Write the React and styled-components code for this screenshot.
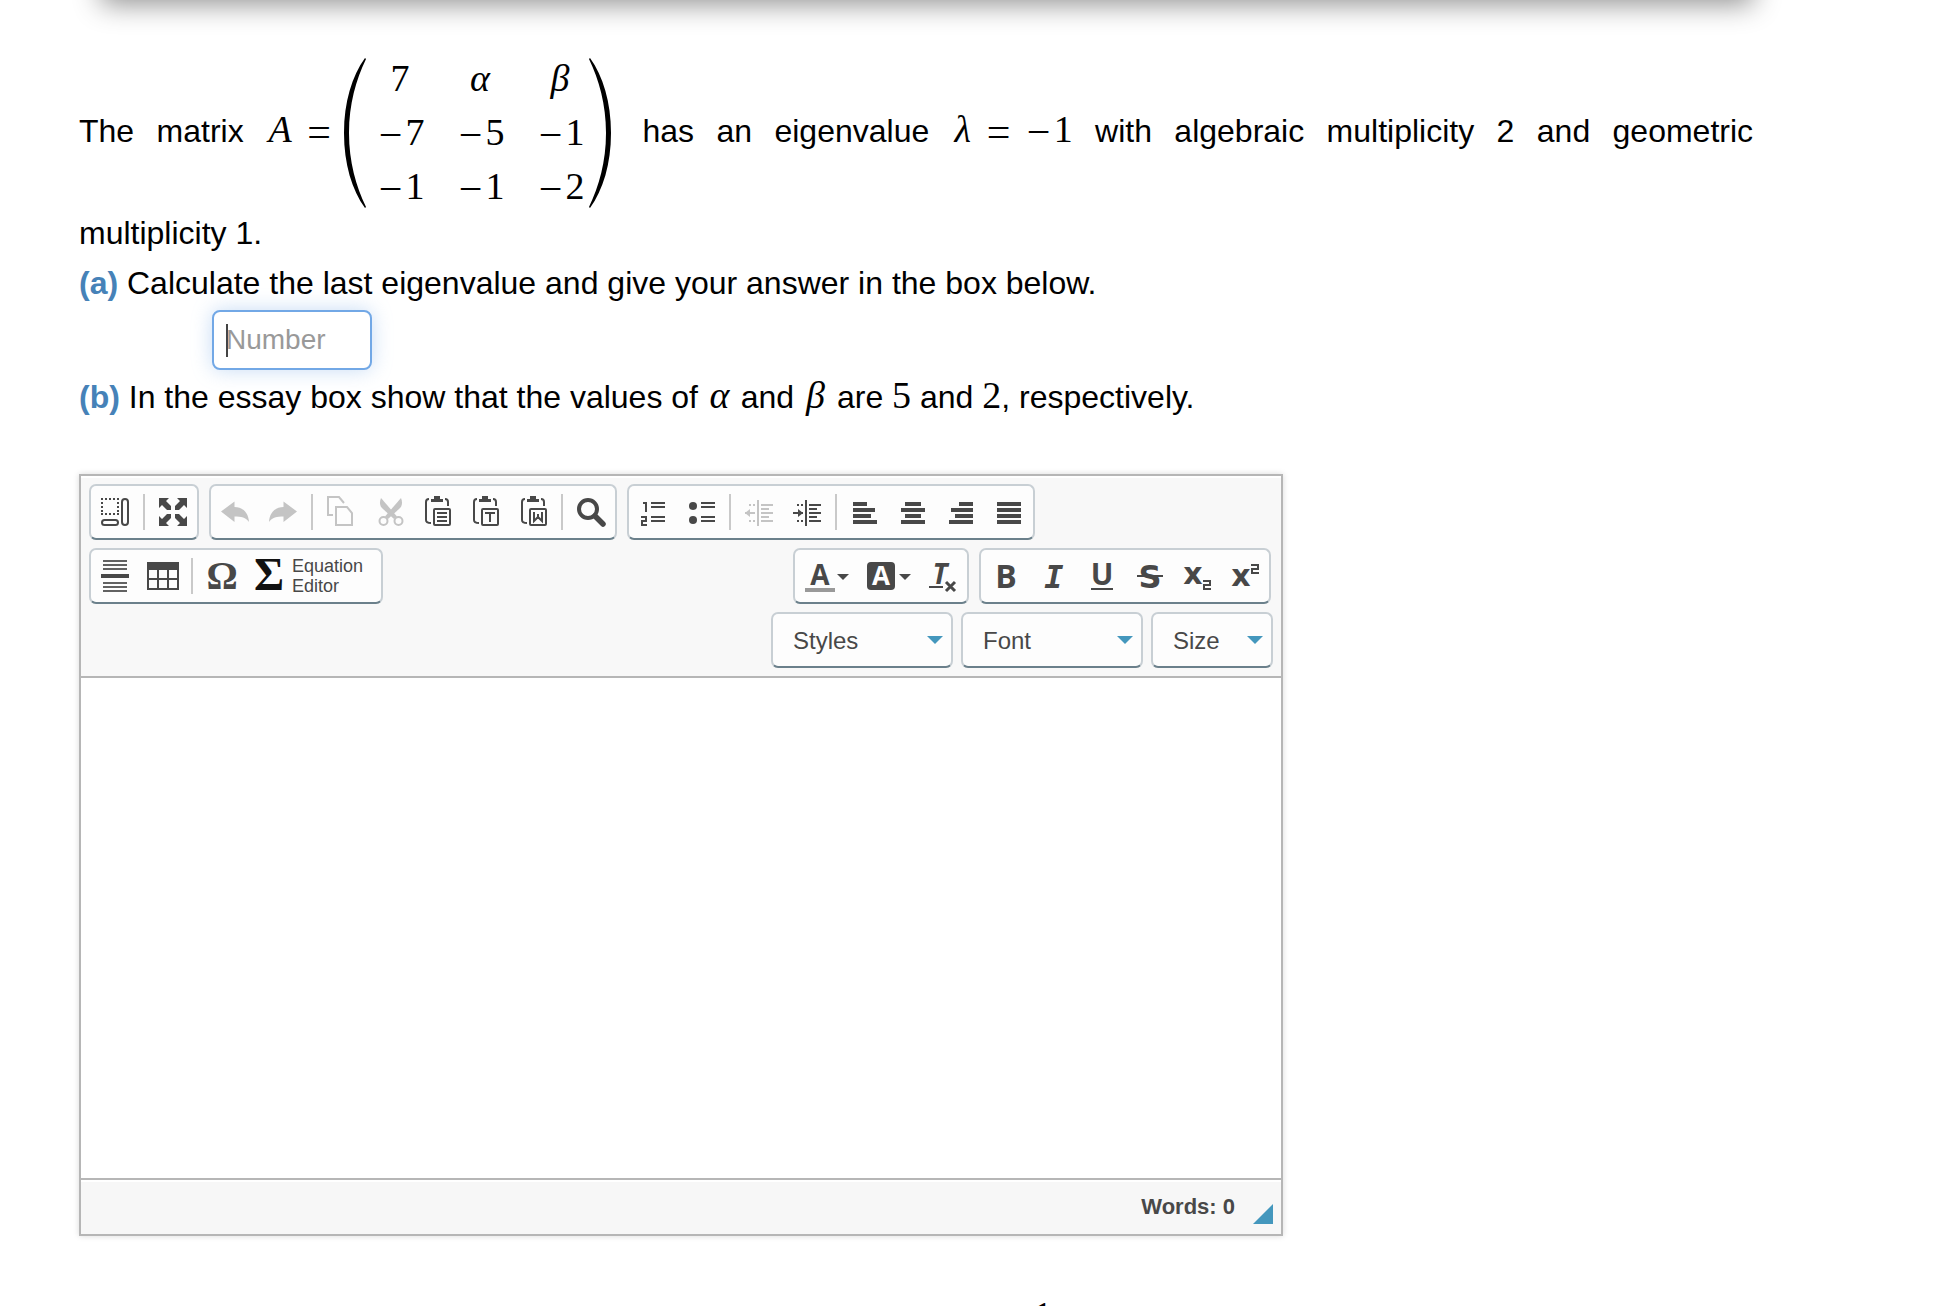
import React from "react";
import styled, { createGlobalStyle } from "styled-components";

const INK = "#484848";
const MUTED = "#c4c4c4";
const SANS = '"Liberation Sans", Arial, Helvetica, sans-serif';
const SERIF = '"Liberation Serif", "Times New Roman", serif';

const GlobalStyle = createGlobalStyle`
  *, *::before, *::after { box-sizing: border-box; }
  body {
    margin: 0;
    background: #fff;
    color: #000;
    font-family: ${SANS};
    font-size: 32px;
    line-height: 46px;
  }
`;

/* ---------- page ---------- */

const Page = styled.main`
  height: 100vh;
  overflow: hidden;
  padding: 0 205px 0 79px;
`;

const PreviousPanel = styled.div`
  height: 40px;
  margin: -40px 0 56px 22px;
  background: #fff;
  box-shadow: 0 4px 28px rgba(0, 0, 0, 0.44);
`;

const Question = styled.section`
  display: flex;
  flex-direction: column;
  gap: 4px;
`;

const Intro = styled.p`
  margin: 0;
  text-align: justify;
`;

const Part = styled.p`
  margin: 0;
`;

const PartLabel = styled.strong`
  color: #4682b8;
  font-weight: 700;
`;

const AnswerRow = styled.div`
  display: flex;
  padding-left: 133px;
`;

const NumberInput = styled.input`
  width: 160px;
  height: 60px;
  padding: 0 12px;
  border: 2px solid #72a8e6;
  border-radius: 8px;
  outline: none;
  font-family: ${SANS};
  font-size: 28px;
  color: #333;
  background: linear-gradient(#444, #444) no-repeat 12px center / 2px 33px #fff;
  box-shadow: 0 0 20px rgba(114, 168, 230, 0.4);

  &::placeholder {
    color: #999;
    opacity: 1;
  }
`;

/* ---------- mathematics ---------- */

const Formula = styled.span`
  display: inline-flex;
  align-items: center;
  padding-right: 9px;
  text-align: center;
`;

const FormulaLead = styled.span`
  padding-bottom: 6px;
  line-height: 38px;
  white-space: nowrap;
`;

const InlineFormula = styled.span`
  display: inline-block;
  line-height: 38px;
  white-space: nowrap;
  text-align: center;
`;

const Letter = styled.i`
  display: inline-block;
  width: ${(p) => p.$w || 25}px;
  font-family: ${SERIF};
  font-size: 38px;
  line-height: 38px;
  text-align: center;
`;

const Numeral = styled.span`
  font-family: ${SERIF};
  font-size: 38px;
  line-height: 38px;
`;

const Sign = styled.span`
  display: inline-block;
  width: ${(p) => p.$w || 30}px;
  font-family: ${SERIF};
  font-size: 42px;
  line-height: 38px;
  vertical-align: -4px;
  text-align: center;
`;

const MatrixGrid = styled.span`
  display: grid;
  grid-template-columns: repeat(3, 50px);
  grid-auto-rows: 54px;
  column-gap: 30px;
  align-items: center;
  margin: -4px 4px -4px 9px;
`;

const Entry = styled.span`
  line-height: 38px;
  white-space: nowrap;
`;

const Delimiter = styled.svg`
  display: block;
  flex: none;
`;

function Paren({ close }) {
  const d = close
    ? "M1 0C14 18 22 44 22 75S14 132 1 150L0 149C10 128 17 104 17 75S10 22 0 1Z"
    : "M21 0C8 18 0 44 0 75S8 132 21 150L22 149C12 128 5 104 5 75S12 22 22 1Z";
  return (
    <Delimiter width="22" height="150" viewBox="0 0 22 150" aria-hidden="true">
      <path d={d} fill="#000" />
    </Delimiter>
  );
}

const rows = [
  ["7", "α", "β"],
  ["−7", "−5", "−1"],
  ["−1", "−1", "−2"],
];

function MatrixEntry({ value }) {
  if (value.startsWith("−")) {
    return (
      <Entry>
        <Sign>−</Sign>
        <Numeral>{value.slice(1)}</Numeral>
      </Entry>
    );
  }
  return <Entry>{/\d/.test(value) ? <Numeral>{value}</Numeral> : <Letter>{value}</Letter>}</Entry>;
}

/* ---------- editor ---------- */

const Editor = styled.section`
  width: 100%;
  max-width: 1204px;
  margin-top: 54px;
  border: 2px solid #b6b6b6;
  box-shadow: 0 0 6px rgba(0, 0, 0, 0.15);
  font-size: 24px;
  line-height: 28px;
  color: ${INK};
`;

const Toolbar = styled.div`
  display: flex;
  flex-direction: column;
  gap: 8px;
  padding: 8px;
  background: #f8f8f8;
  border-bottom: 2px solid #b6b6b6;
  box-shadow: inset 0 2px 0 #fff;
`;

const ToolRow = styled.div`
  display: flex;
  justify-content: ${(p) => p.$justify || "flex-start"};
  gap: ${(p) => p.$gap || 10}px;
  padding-right: ${(p) => p.$end || 0}px;
`;

const Cluster = styled.div`
  display: flex;
  gap: 10px;
`;

const framed = `
  border: 2px solid #c8cfd4;
  border-bottom-color: #6b808b;
  border-radius: 7px;
  background: #fdfdfd;
`;

const Group = styled.div`
  display: flex;
  align-items: center;
  height: 56px;
  ${framed}
`;

const ToolButton = styled.button`
  display: flex;
  align-items: center;
  justify-content: ${(p) => (p.$labelled ? "flex-start" : "center")};
  gap: 8px;
  width: ${(p) => p.$w || 48}px;
  height: 52px;
  padding: 0 ${(p) => (p.$labelled ? 7 : 0)}px;
  border: 0;
  background: none;
  color: ${INK};
  font-family: ${SANS};
  font-size: 18px;
  line-height: 20px;
  text-align: left;

  &:disabled {
    color: ${MUTED};
  }
`;

const Separator = styled.span`
  width: 2px;
  height: 36px;
  margin: 0 4px;
  background: #c9c9c9;
`;

const Combo = styled.div`
  position: relative;
  width: ${(p) => p.$w}px;
`;

const ComboSelect = styled.select`
  display: block;
  width: 100%;
  height: 56px;
  padding: 0 32px 0 20px;
  appearance: none;
  color: ${INK};
  font-family: ${SANS};
  font-size: 24px;
  ${framed}
`;

const ComboArrow = styled.svg`
  position: absolute;
  top: 24px;
  right: 10px;
  pointer-events: none;
`;

const EssayArea = styled.textarea`
  display: block;
  width: 100%;
  height: 500px;
  padding: 20px;
  border: 0;
  outline: none;
  resize: none;
  background: #fff;
  font-family: ${SANS};
  font-size: 24px;
`;

const StatusBar = styled.div`
  display: flex;
  align-items: center;
  justify-content: flex-end;
  gap: 18px;
  height: 56px;
  padding-right: 8px;
  border-top: 2px solid #b6b6b6;
  background: #f7f7f7;
  box-shadow: inset 0 2px 0 #fff;
  font-size: 22px;
  font-weight: 700;
`;

const Grip = styled.svg`
  align-self: flex-end;
  margin-bottom: 10px;
`;

const NextEquation = styled.div`
  display: flex;
  justify-content: center;
  padding: 60px 0 0 254px;
`;

/* ---------- icons ---------- */

const LABEL_FONT = '"Open Sans", "Noto Sans", sans-serif';

const IconFrame = styled.svg`
  flex: none;
  overflow: visible;
`;

function Icon({ w = 32, children }) {
  return (
    <IconFrame width={w} height="32" viewBox={`0 0 ${w} 32`} fill="currentColor" aria-hidden="true">
      {children}
    </IconFrame>
  );
}

function Bars({ list }) {
  return list.map(([x, y, w, h = 2], i) => <rect key={i} x={x} y={y} width={w} height={h} />);
}

function Glyph({ x = 16, y, size = 32, font = LABEL_FONT, italic, fill, children }) {
  return (
    <text
      x={x}
      y={y}
      textAnchor="middle"
      fontFamily={font}
      fontSize={size}
      fontWeight="700"
      fontStyle={italic ? "italic" : "normal"}
      fill={fill || "currentColor"}
    >
      {children}
    </text>
  );
}

const line = { fill: "none", stroke: "currentColor", strokeWidth: 2 };

const BlocksIcon = () => (
  <Icon>
    <g {...line}>
      <path d="M2 3H20M2 18H20M3 6V18M19 6V18" strokeDasharray="2 2" />
      <rect x="23" y="3" width="6" height="26" rx="3" />
      <rect x="3" y="24" width="16" height="5" rx="2.5" />
    </g>
  </Icon>
);

const MaximizeIcon = () => (
  <Icon>
    {[0, 90, 180, 270].map((a) => (
      <path key={a} transform={`rotate(${a} 16 16)`} d="M2 2H12L9 5 14 10V14H10L5 9 2 12Z" />
    ))}
  </Icon>
);

const arrowPath = "M2 15.5 15.5 5.5V11C24 11 29.5 17 30 26 27 21.5 22 20.5 15.5 20.5V26Z";
const UndoIcon = () => (
  <Icon>
    <path d={arrowPath} />
  </Icon>
);
const RedoIcon = () => (
  <Icon>
    <path d={arrowPath} transform="translate(32 0) scale(-1 1)" />
  </Icon>
);

const CopyIcon = () => (
  <Icon>
    <path {...line} d="M8 19H3V1H14L19 7M11 11H22L27 17V29H11Z" />
  </Icon>
);

const CutIcon = () => (
  <Icon>
    <path d="M8 2C6 7 7 10 10 13L21 23 24 20.500Z" />
    <path d="M28 2C30 7 29 10 26 13L15 23 12 20.500Z" />
    <circle {...line} cx="10.500" cy="25" r="4" />
    <circle {...line} cx="25.500" cy="25" r="4" />
  </Icon>
);

function PasteIcon({ children }) {
  return (
    <Icon>
      <path d="M10 6V3H13V0H19V3H22V6Z" />
      <g {...line}>
        <path d="M8 3C6 3 5 4 5 6V24C5 26 6 27 10 27M24 3C26 3 27 4 27 6V10" />
        <rect x="13" y="13" width="16" height="16" rx="1" />
        {children}
      </g>
    </Icon>
  );
}

const FindIcon = () => (
  <Icon>
    <circle cx="13" cy="13" r="9" fill="none" stroke="currentColor" strokeWidth="4" />
    <path d="M20 20L28 28" stroke="currentColor" strokeWidth="5.500" strokeLinecap="round" />
  </Icon>
);

const NumberedIcon = () => (
  <Icon>
    <path {...line} d="M6 7H9V16M4 21H9V25H5V29H10" />
    <Bars list={[[14, 6, 14], [14, 10, 14], [14, 20, 14], [14, 24, 14]]} />
  </Icon>
);

const BulletedIcon = () => (
  <Icon>
    <circle cx="8" cy="10" r="4" />
    <circle cx="8" cy="24" r="4" />
    <Bars list={[[16, 6, 14], [16, 10, 14], [16, 20, 14], [16, 24, 14]]} />
  </Icon>
);

function IndentIcon({ out }) {
  return (
    <Icon>
      <Bars
        list={[
          [14, 4, 2, 26], [6, 8, 2], [10, 8, 2], [6, 24, 2], [10, 24, 2], [2, 16, 10],
          [18, 8, 12], [18, 12, 8], [18, 16, 12], [18, 20, 8], [18, 24, 12],
        ]}
      />
      <path d={out ? "M2 17L7 13V21Z" : "M12 17L7 13V21Z"} />
    </Icon>
  );
}

const alignments = {
  left: [[4, 14], [4, 22], [4, 18], [4, 24]],
  center: [[8, 16], [4, 24], [8, 16], [4, 24]],
  right: [[14, 14], [6, 22], [10, 18], [4, 24]],
  justify: [[4, 24], [4, 24], [4, 24], [4, 24]],
};
const AlignIcon = ({ kind }) => (
  <Icon>
    <Bars list={alignments[kind].map(([x, w], i) => [x, 6 + i * 6, w, 4])} />
  </Icon>
);

const RuleIcon = () => (
  <Icon>
    <g opacity="0.85">
      <Bars list={[0, 4, 8, 22, 26, 30].map((y) => [4, y, 24])} />
    </g>
    <Bars list={[[2, 14, 28, 4]]} />
  </Icon>
);

const TableIcon = () => (
  <Icon>
    <Bars
      list={[
        [0, 2, 32, 8], [0, 18, 32], [0, 28, 32],
        [0, 10, 2, 20], [10, 10, 2, 20], [20, 10, 2, 20], [30, 10, 2, 20],
      ]}
    />
  </Icon>
);

const Caret = () => <path d="M42 14H54L48 20Z" />;

const TextColorIcon = () => (
  <Icon w={62}>
    <Glyph x={25} y={25} size={28}>A</Glyph>
    <rect x="10" y="28" width="30" height="4" fill="#999" />
    <Caret />
  </Icon>
);

const BackgroundIcon = () => (
  <Icon w={62}>
    <rect x="10" y="2" width="28" height="28" rx="4" />
    <Glyph x={24} y={25} size={26} fill="#fff">A</Glyph>
    <Caret />
  </Icon>
);

const RemoveFormatIcon = () => (
  <Icon>
    <Glyph x={13} y={24} size={28} italic>T</Glyph>
    <rect x="2" y="26" width="14" height="2" />
    <path d="M19 22L28 31M28 22L19 31" stroke="currentColor" strokeWidth="3" />
  </Icon>
);

const HEAVY_FONT = '"DejaVu Sans", sans-serif';

const TextStyleIcon = ({ kind }) => (
  <Icon>
    {kind === "bold" && <Glyph x={17} y={28}>B</Glyph>}
    {kind === "italic" && (
      <Glyph x={17} y={28} font='"DejaVu Sans Mono", monospace' italic>I</Glyph>
    )}
    {kind === "underline" && (
      <>
        <Glyph x={17} y={25} size={30}>U</Glyph>
        <rect x="6" y="28" width="22" height="2" />
      </>
    )}
    {kind === "strike" && (
      <>
        <Glyph x={17} y={28} font={HEAVY_FONT}>S</Glyph>
        <rect x="4" y="15" width="26" height="2" />
      </>
    )}
    {kind === "sub" && (
      <>
        <Glyph x={12} y={24} size={30} font={HEAVY_FONT}>x</Glyph>
        <path {...line} d="M22 21H29V25H23V29H30" />
      </>
    )}
    {kind === "sup" && (
      <>
        <Glyph x={12} y={26} size={30} font={HEAVY_FONT}>x</Glyph>
        <path {...line} d="M22 5H29V9H23V13H30" />
      </>
    )}
  </Icon>
);

/* ---------- toolbar parts ---------- */

function Tool({ label, w, disabled, children }) {
  return (
    <ToolButton type="button" aria-label={label} $w={w} disabled={disabled}>
      {children}
    </ToolButton>
  );
}

function Dropdown({ name, w }) {
  return (
    <Combo $w={w}>
      <ComboSelect aria-label={name} defaultValue="">
        <option value="">{name}</option>
      </ComboSelect>
      <ComboArrow width="16" height="8" viewBox="0 0 16 8" aria-hidden="true">
        <path d="M0 0H16L8 8Z" fill="#4497bd" />
      </ComboArrow>
    </Combo>
  );
}

export default function App() {
  return (
    <Page>
      <GlobalStyle />
      <PreviousPanel />
      <Question>
        <Intro>
          The matrix{" "}
          <Formula>
            <FormulaLead>
              <Letter $w={28}>A</Letter>
              <Sign $w={50}>=</Sign>
            </FormulaLead>
            <Paren />
            <MatrixGrid>
              {rows.flat().map((value, i) => (
                <MatrixEntry key={i} value={value} />
              ))}
            </MatrixGrid>
            <Paren close />
          </Formula>{" "}
          has an eigenvalue{" "}
          <InlineFormula>
            <Letter $w={22}>λ</Letter>
            <Sign $w={50}>=</Sign>
            <Sign>−</Sign>
            <Numeral>1</Numeral>
          </InlineFormula>{" "}
          with algebraic multiplicity 2 and geometric multiplicity&nbsp;1.
        </Intro>
        <Part>
          <PartLabel id="part-a">(a)</PartLabel> Calculate the last eigenvalue and give your answer in
          the box below.
        </Part>
        <AnswerRow>
          <NumberInput type="text" placeholder="Number" aria-labelledby="part-a" />
        </AnswerRow>
        <Part>
          <PartLabel id="part-b">(b)</PartLabel> In the essay box show that the values of{" "}
          <Letter>α</Letter> and <Letter>β</Letter> are <Numeral>5</Numeral> and{" "}
          <Numeral>2</Numeral>, respectively.
        </Part>
      </Question>

      <Editor>
        <Toolbar role="toolbar">
          <ToolRow>
            <Group>
              <Tool label="Show blocks"><BlocksIcon /></Tool>
              <Separator />
              <Tool label="Maximize"><MaximizeIcon /></Tool>
            </Group>
            <Group>
              <Tool label="Undo" disabled><UndoIcon /></Tool>
              <Tool label="Redo" disabled><RedoIcon /></Tool>
              <Separator />
              <Tool label="Copy" disabled><CopyIcon /></Tool>
              <Tool label="Cut" disabled><CutIcon /></Tool>
              <Tool label="Paste">
                <PasteIcon><path d="M16 17H26M16 21H26M16 25H26" /></PasteIcon>
              </Tool>
              <Tool label="Paste as plain text">
                <PasteIcon><path d="M16 17H26M21 17V26" /></PasteIcon>
              </Tool>
              <Tool label="Paste from Word">
                <PasteIcon><path d="M17 16V25L21 21 25 25V16M21 18V23" /></PasteIcon>
              </Tool>
              <Separator />
              <Tool label="Find"><FindIcon /></Tool>
            </Group>
            <Group>
              <Tool label="Numbered list"><NumberedIcon /></Tool>
              <Tool label="Bulleted list"><BulletedIcon /></Tool>
              <Separator />
              <Tool label="Decrease indent" disabled><IndentIcon out /></Tool>
              <Tool label="Increase indent"><IndentIcon /></Tool>
              <Separator />
              {Object.keys(alignments).map((kind) => (
                <Tool key={kind} label={`Align ${kind}`}><AlignIcon kind={kind} /></Tool>
              ))}
            </Group>
          </ToolRow>

          <ToolRow $justify="space-between" $end={2}>
            <Group>
              <Tool label="Horizontal line"><RuleIcon /></Tool>
              <Tool label="Table"><TableIcon /></Tool>
              <Separator />
              <Tool label="Special character">
                <Icon><Glyph x={17} y={29} size={39} font={SERIF}>Ω</Glyph></Icon>
              </Tool>
              <ToolButton type="button" $w={136} $labelled>
                <Icon><Glyph x={17} y={30} size={46} font={SERIF} fill="#111">Σ</Glyph></Icon>
                <span>Equation<br />Editor</span>
              </ToolButton>
            </Group>
            <Cluster>
              <Group>
                <Tool label="Text color" w={62}><TextColorIcon /></Tool>
                <Tool label="Background color" w={62}><BackgroundIcon /></Tool>
                <Tool label="Remove format"><RemoveFormatIcon /></Tool>
              </Group>
              <Group>
                {["bold", "italic", "underline", "strike", "sub", "sup"].map((kind) => (
                  <Tool key={kind} label={kind}><TextStyleIcon kind={kind} /></Tool>
                ))}
              </Group>
            </Cluster>
          </ToolRow>

          <ToolRow $justify="flex-end" $gap={8}>
            <Dropdown name="Styles" w={182} />
            <Dropdown name="Font" w={182} />
            <Dropdown name="Size" w={122} />
          </ToolRow>
        </Toolbar>
        <EssayArea aria-labelledby="part-b" />
        <StatusBar>
          <span>Words: 0</span>
          <Grip width="20" height="20" viewBox="0 0 20 20" aria-hidden="true">
            <path d="M20 0V20H0Z" fill="#4497bd" />
          </Grip>
        </StatusBar>
      </Editor>

      <NextEquation>
        <Numeral>1</Numeral>
      </NextEquation>
    </Page>
  );
}
